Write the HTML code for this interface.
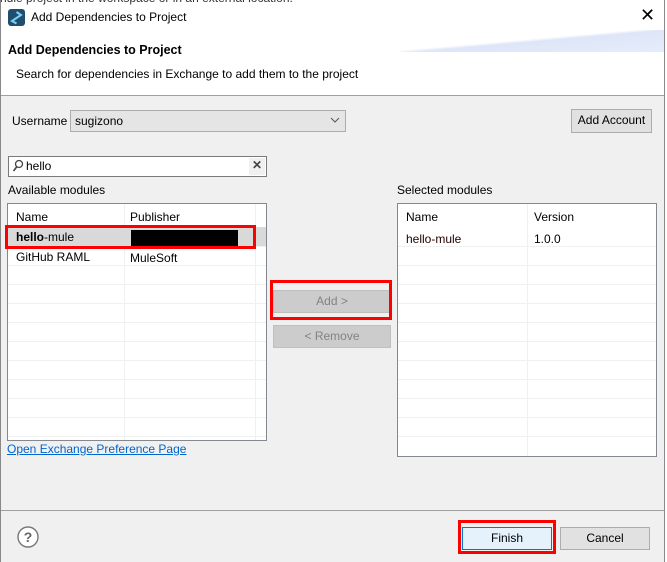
<!DOCTYPE html>
<html><head><style>
*{box-sizing:border-box;margin:0;padding:0}
body{width:667px;height:562px;overflow:hidden;background:#f0f0f0;font-family:"Liberation Sans",sans-serif;font-size:12px;color:#000;position:relative}
.a{position:absolute}
.t{white-space:nowrap}
.btn{position:absolute;background:#e1e1e1;border:1px solid #adadad;text-align:center;line-height:21px}
.red{position:absolute;border:3px solid #f00}
.tbl{position:absolute;background:#fff;border:1px solid #828790;overflow:hidden}
.hl{position:absolute;left:0;right:0;height:1px;background:#f0f0f0}
.vl{position:absolute;top:0;bottom:0;width:1px;background:#f0f0f0}
</style></head><body>
<div class="a" style="left:0;top:0;width:667px;height:5px;background:#fff"></div>
<div class="a t" style="left:0;top:-9px;font-size:12px;color:#333">ndle project in the workspace or in an external location.</div>
<div class="a" style="left:664px;top:0;width:3px;height:562px;background:#fff;border-left:1px solid #888"></div>
<div class="a" style="left:0;top:5px;width:664px;height:91px;background:#fff;border-bottom:1px solid #a0a0a0"></div>
<div class="a" style="left:0;top:0;width:1px;height:562px;background:#888"></div>
<svg class="a" style="left:8px;top:9px" width="17" height="17"><rect width="17" height="17" rx="3" fill="#1f4e6e"/><path d="M8.5 3 L13 6 L8.5 9 L4 12 L8.5 14.5" stroke="#7fd0f0" stroke-width="2" fill="none"/></svg>
<div class="a t" style="left:31px;top:10px;font-size:12px">Add Dependencies to Project</div>
<div class="a t" style="left:640px;top:5px;font-size:18px;font-weight:300">✕</div>
<div class="a" style="left:400px;top:30px;width:264px;height:22px;background:linear-gradient(175deg,transparent 45%,#dde6f8 52%,#e6ecfa);border-top-left-radius:200px 30px"></div>
<div class="a t" style="left:8px;top:43px;font-weight:bold;font-size:12.5px">Add Dependencies to Project</div>
<div class="a t" style="left:16px;top:67px">Search for dependencies in Exchange to add them to the project</div>

<div class="a t" style="left:12px;top:114px">Username</div>
<div class="a" style="left:70px;top:110px;width:276px;height:22px;background:#e5e5e5;border:1px solid #acacac"></div>
<div class="a t" style="left:75px;top:114px">sugizono</div>
<svg class="a" style="left:330px;top:117px" width="10" height="6"><path d="M1 1 L5 5 L9 1" stroke="#555" fill="none"/></svg>
<div class="btn" style="left:571px;top:109px;width:81px;height:24px">Add Account</div>

<div class="a" style="left:8px;top:156px;width:259px;height:21px;background:#fff;border:1px solid #7a7a7a"></div>
<svg class="a" style="left:12px;top:159px" width="12" height="13"><circle cx="7" cy="5" r="3.5" stroke="#444" stroke-width="1.3" fill="none"/><path d="M5 7.5 L1.5 12" stroke="#444" stroke-width="1.6"/></svg>
<div class="a t" style="left:26px;top:159px">hello</div>
<div class="a" style="left:249px;top:158px;width:16px;height:17px;background:#f0f0f0"></div>
<div class="a t" style="left:252px;top:158px;font-weight:bold;font-size:12px;color:#444">✕</div>

<div class="a t" style="left:8px;top:183px">Available modules</div>
<div class="tbl" style="left:7px;top:203px;width:260px;height:238px">
 <div class="vl" style="left:116px"></div><div class="vl" style="left:247px"></div>
 <div class="hl" style="top:42px"></div><div class="hl" style="top:61px"></div><div class="hl" style="top:80px"></div><div class="hl" style="top:99px"></div><div class="hl" style="top:118px"></div><div class="hl" style="top:137px"></div><div class="hl" style="top:156px"></div><div class="hl" style="top:175px"></div><div class="hl" style="top:194px"></div><div class="hl" style="top:213px"></div><div class="hl" style="top:232px"></div>
 <div class="a" style="left:0;top:23px;width:258px;height:19px;background:#d9d9d9"></div>
 <div class="a t" style="left:8px;top:6px">Name</div><div class="a t" style="left:122px;top:6px">Publisher</div>
 <div class="a t" style="left:8px;top:26px"><b>hello</b>-mule</div>
 <div class="a" style="left:123px;top:26px;width:107px;height:17px;background:#000"></div>
 <div class="a t" style="left:8px;top:46px">GitHub RAML</div><div class="a t" style="left:122px;top:47px">MuleSoft</div>
</div>
<div class="red" style="left:5px;top:225px;width:251px;height:24px"></div>

<div class="btn" style="left:273px;top:290px;width:118px;height:23px;background:#cccccc;border-color:#bfbfbf;color:#838383">Add &gt;</div>
<div class="red" style="left:270px;top:280px;width:122px;height:40px"></div>
<div class="btn" style="left:273px;top:325px;width:118px;height:23px;background:#cccccc;border-color:#bfbfbf;color:#838383">&lt; Remove</div>

<div class="a t" style="left:397px;top:183px">Selected modules</div>
<div class="tbl" style="left:397px;top:203px;width:260px;height:254px">
 <div class="vl" style="left:129px"></div>
 <div class="hl" style="top:42px"></div><div class="hl" style="top:61px"></div><div class="hl" style="top:80px"></div><div class="hl" style="top:99px"></div><div class="hl" style="top:118px"></div><div class="hl" style="top:137px"></div><div class="hl" style="top:156px"></div><div class="hl" style="top:175px"></div><div class="hl" style="top:194px"></div><div class="hl" style="top:213px"></div><div class="hl" style="top:232px"></div>
 <div class="a t" style="left:8px;top:6px">Name</div><div class="a t" style="left:136px;top:6px">Version</div>
 <div class="a t" style="left:8px;top:28px;color:#200">hello-mule</div><div class="a t" style="left:136px;top:28px">1.0.0</div>
</div>

<div class="a t" style="left:7px;top:442px;color:#0066cc;text-decoration:underline">Open Exchange Preference Page</div>
<div class="a" style="left:1px;top:510px;width:663px;height:1px;background:#a0a0a0"></div>
<svg class="a" style="left:17px;top:526px" width="22" height="22"><circle cx="11" cy="11" r="10" fill="#fff" stroke="#777" stroke-width="1.4"/><text x="11" y="16" text-anchor="middle" font-family="Liberation Sans" font-weight="bold" font-size="14" fill="#666">?</text></svg>
<div class="btn" style="left:462px;top:527px;width:90px;height:23px;background:#e5f1fb;border-color:#0078d7">Finish</div>
<div class="red" style="left:458px;top:520px;width:98px;height:34px"></div>
<div class="btn" style="left:560px;top:527px;width:90px;height:23px">Cancel</div>
</body></html>
